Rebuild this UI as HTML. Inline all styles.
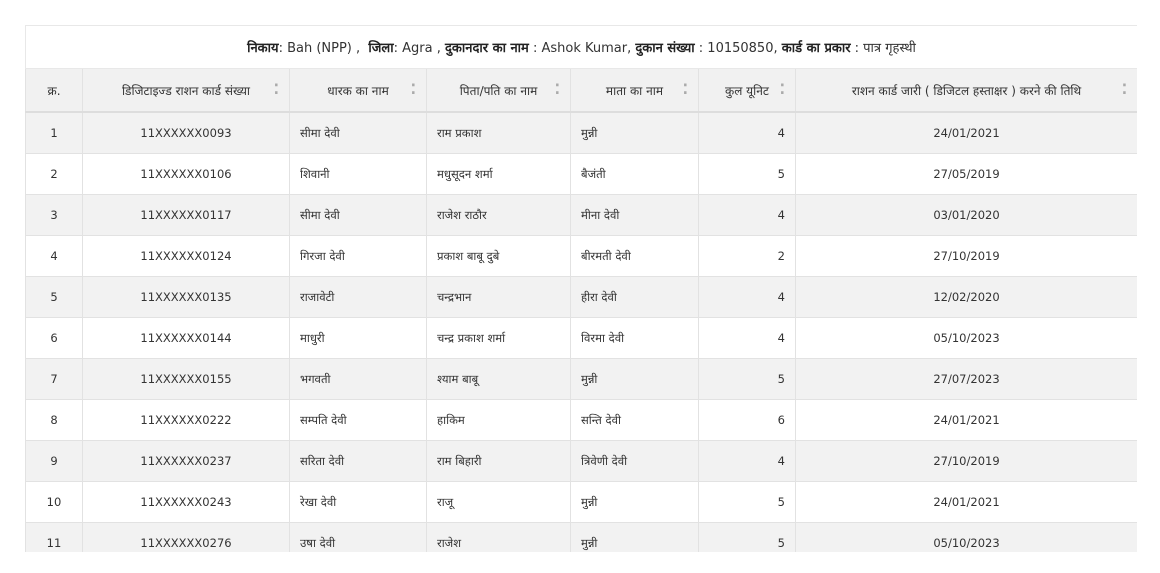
<!DOCTYPE html>
<html><head><meta charset="utf-8"><style>
body{margin:0;background:#fff;width:1160px;height:573px;overflow:hidden;font-family:"DejaVu Sans","Liberation Sans",sans-serif;color:#333;}
.wrap{position:absolute;left:25px;top:25px;width:1112px;height:527px;overflow:hidden;}
table{border-collapse:collapse;width:1112px;table-layout:fixed;font-size:11.5px;}
td,th{border:1px solid #e2e2e2;padding:0 10px;white-space:nowrap;overflow:hidden;}
.title td{height:42px;text-align:center;font-size:13px;background:#fff;border-color:#e8e8e8}
.title b{color:#222}
th{height:42px;background:#f1f1f1;font-weight:normal;color:#333;text-align:center;font-size:12px;border-bottom:2px solid #ddd;position:relative}
th .s{color:#aaa;position:absolute;right:10px;top:13px;font-size:14px;font-weight:bold}
tbody.d td{height:40px;}
tbody.d tr:nth-child(odd) td{background:#f2f2f2}
.c{text-align:center}.r{text-align:right}
</style></head><body><div class="wrap"><table>
<colgroup><col style="width:57px"><col style="width:207px"><col style="width:137px"><col style="width:144px"><col style="width:128px"><col style="width:97px"><col style="width:342px"></colgroup>
<tr class="title"><td colspan="7"><b>निकाय</b>: Bah (NPP) , &nbsp;<b>जिला</b>: Agra , <b>दुकानदार का नाम</b> : Ashok Kumar, <b>दुकान संख्या</b> : 10150850, <b>कार्ड का प्रकार</b> : पात्र गृहस्थी</td></tr>
<tr><th>क्र.</th><th>डिजिटाइज्ड राशन कार्ड संख्या <span class="s">⁚</span></th><th>धारक का नाम <span class="s">⁚</span></th><th>पिता/पति का नाम <span class="s">⁚</span></th><th>माता का नाम <span class="s">⁚</span></th><th>कुल यूनिट <span class="s">⁚</span></th><th>राशन कार्ड जारी ( डिजिटल हस्ताक्षर ) करने की तिथि <span class="s">⁚</span></th></tr>
<tbody class="d">
<tr><td class="c">1</td><td class="c">11XXXXXX0093</td><td>सीमा देवी</td><td>राम प्रकाश</td><td>मुन्नी</td><td class="r">4</td><td class="c">24/01/2021</td></tr>
<tr><td class="c">2</td><td class="c">11XXXXXX0106</td><td>शिवानी</td><td>मधुसूदन शर्मा</td><td>बैजंती</td><td class="r">5</td><td class="c">27/05/2019</td></tr>
<tr><td class="c">3</td><td class="c">11XXXXXX0117</td><td>सीमा देवी</td><td>राजेश राठौर</td><td>मीना देवी</td><td class="r">4</td><td class="c">03/01/2020</td></tr>
<tr><td class="c">4</td><td class="c">11XXXXXX0124</td><td>गिरजा देवी</td><td>प्रकाश बाबू दुबे</td><td>बीरमती देवी</td><td class="r">2</td><td class="c">27/10/2019</td></tr>
<tr><td class="c">5</td><td class="c">11XXXXXX0135</td><td>राजावेटी</td><td>चन्द्रभान</td><td>हीरा देवी</td><td class="r">4</td><td class="c">12/02/2020</td></tr>
<tr><td class="c">6</td><td class="c">11XXXXXX0144</td><td>माधुरी</td><td>चन्द्र प्रकाश शर्मा</td><td>विरमा देवी</td><td class="r">4</td><td class="c">05/10/2023</td></tr>
<tr><td class="c">7</td><td class="c">11XXXXXX0155</td><td>भगवती</td><td>श्याम बाबू</td><td>मुन्नी</td><td class="r">5</td><td class="c">27/07/2023</td></tr>
<tr><td class="c">8</td><td class="c">11XXXXXX0222</td><td>सम्पति देवी</td><td>हाकिम</td><td>सन्ति देवी</td><td class="r">6</td><td class="c">24/01/2021</td></tr>
<tr><td class="c">9</td><td class="c">11XXXXXX0237</td><td>सरिता देवी</td><td>राम बिहारी</td><td>त्रिवेणी देवी</td><td class="r">4</td><td class="c">27/10/2019</td></tr>
<tr><td class="c">10</td><td class="c">11XXXXXX0243</td><td>रेखा देवी</td><td>राजू</td><td>मुन्नी</td><td class="r">5</td><td class="c">24/01/2021</td></tr>
<tr><td class="c">11</td><td class="c">11XXXXXX0276</td><td>उषा देवी</td><td>राजेश</td><td>मुन्नी</td><td class="r">5</td><td class="c">05/10/2023</td></tr>
</tbody></table></div></body></html>
